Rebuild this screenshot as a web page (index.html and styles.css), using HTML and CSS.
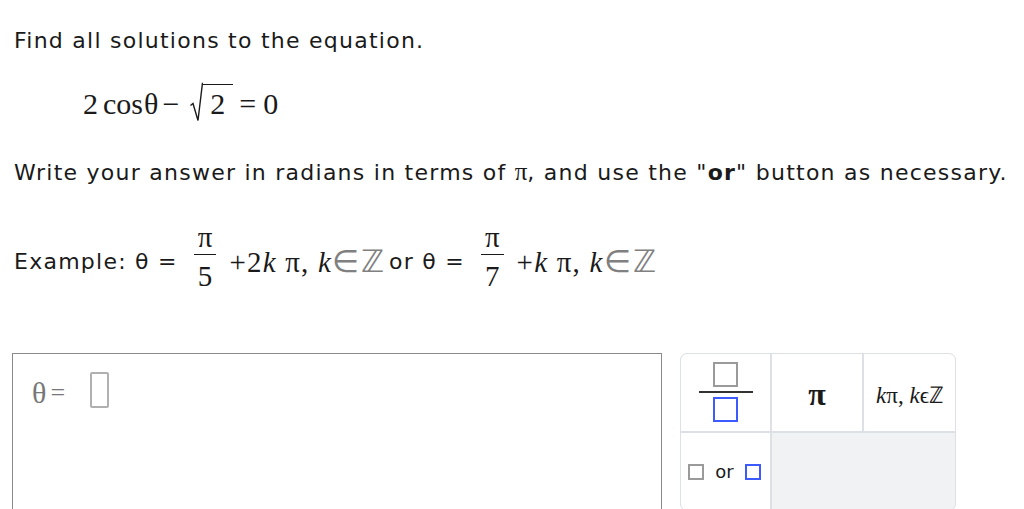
FILE: index.html
```html
<!DOCTYPE html>
<html lang="en">
<head>
<meta charset="UTF-8">
<title>Solve the equation</title>
<link rel="stylesheet" href="styles.css">
</head>
<body>
    <!-- question -->
    <p class="intro">Find all solutions to the equation.</p>
    <div class="equation">
        <span>2</span><span class="fn">cos</span><span>θ</span><span class="op">−</span><span class="sqrt"><svg class="radical" width="13" height="40" viewBox="0 0 13 40"><polyline points="0.5,23.5 3,21.5 8,38.5 12.5,0.75" fill="none" stroke="#1a1a1a" stroke-width="1.4"/></svg><span class="radicand">2</span></span><span class="op eq">=</span><span>0</span>
    </div>
    <p class="intro note">Write your answer in radians in terms of <span class="pi">π</span>, and use the "<b>or</b>" button as necessary.</p>

    <!-- example -->
    <div class="example">
        <span class="label">Example: θ =</span>
        <span class="frac"><span class="num">π</span><span class="den">5</span></span>
        <span class="math">+2<i>k</i> π, <i>k</i><span class="set">∈ℤ</span></span>
        <span class="label label-or">or θ =</span>
        <span class="frac"><span class="num">π</span><span class="den">7</span></span>
        <span class="math">+<i>k</i> π, <i>k</i><span class="set">∈ℤ</span></span>
    </div>

    <!-- answer area -->
    <div class="answer-row">
        <div class="answer-box">
            <span class="answer-theta">θ</span>
            <span class="answer-eq">=</span>
            <span class="slot"></span>
        </div>
        <div class="keypad">
            <button class="key key-frac">
                <span class="box box-gray"></span>
                <span class="bar"></span>
                <span class="box box-blue"></span>
            </button>
            <button class="key key-pi"><span>π</span></button>
            <button class="key key-kpi"><span><i>k</i>π, <i>k</i>ϵℤ</span></button>
            <button class="key key-or">
                <span class="mini mini-gray"></span>
                <span>or</span>
                <span class="mini mini-blue"></span>
            </button>
            <div class="key-empty"></div>
        </div>
    </div>
</body>
</html>
```

FILE: styles.css
```css
body {
    font-family: "DejaVu Sans", Verdana, sans-serif;
    font-size: 22px;
    letter-spacing: 1.25px;
    color: #1a1a1a;
    background-color: #ffffff;
    margin: 0;
    padding: 25px 0 0 14px;
    overflow: hidden;
}
.intro {
    margin: 0;
    line-height: 32px;
}
.equation {
    font-family: "Liberation Serif", "Times New Roman", serif;
    font-size: 30px;
    letter-spacing: 0;
    line-height: 40px;
    margin: 25px 0 0 69px;
    height: 40px;
    white-space: nowrap;
}
.equation .fn {
    margin-left: 5px;
    margin-right: 1px;
}
.equation .op {
    margin: 0 4px 0 4px;
}
.equation .eq {
    margin: 0 7px 0 6px;
}
.radical {
    vertical-align: -8px;
    margin-left: 7px;
}
.radicand {
    display: inline-block;
    line-height: 30px;
    border-top: 1.5px solid #1a1a1a;
    padding: 4px 8px 0 7px;
}
.note {
    margin-top: 34px;
}
.pi {
    font-family: "Liberation Serif", serif;
    font-size: 25px;
    letter-spacing: 0;
}
.example {
    display: flex;
    align-items: center;
    margin-top: 39px;
    height: 66px;
    white-space: nowrap;
}
.label-or {
    margin-left: 3px;
}
.frac {
    display: inline-flex;
    flex-direction: column;
    align-items: center;
    font-family: "Liberation Serif", serif;
    font-size: 29px;
    letter-spacing: 0;
    line-height: 28px;
    margin: 0 0 10px 16px;
}
.frac .num {
    border-bottom: 1.5px solid #1a1a1a;
    padding: 0 4px 3px;
}
.frac .den {
    padding-top: 7px;
}
.math {
    font-family: "Liberation Serif", serif;
    font-size: 29px;
    letter-spacing: 1.2px;
    margin-left: 13px;
}
.math i {
    font-style: italic;
}
.set {
    color: #808080;
    font-size: 31px;
    letter-spacing: 2px;
}
.answer-row {
    display: flex;
    gap: 18px;
    margin-top: 59px;
    margin-left: -2px;
}
.answer-box {
    width: 650px;
    height: 170px;
    border: 1px solid #8a8a8a;
    display: flex;
    align-items: flex-start;
    padding: 18px 0 0 19px;
    box-sizing: border-box;
    color: #777777;
    font-family: "Liberation Serif", serif;
    font-size: 30px;
    letter-spacing: 0;
    line-height: 36px;
}
.answer-theta {
    margin-top: 3px;
}
.answer-eq {
    margin: 3px 25px 0 4px;
    font-size: 26px;
}
.slot {
    width: 15px;
    height: 32px;
    border: 2px solid #b0b0b0;
    border-radius: 2px;
}
.keypad {
    display: grid;
    grid-template-columns: 89px 90px 91px;
    grid-template-rows: 77px 77px;
    gap: 2px;
    background-color: #dde1e6;
    border: 1px solid #dde1e6;
    border-radius: 7px;
    overflow: hidden;
    align-self: flex-start;
}
.key {
    background-color: #ffffff;
    border: none;
    margin: 0;
    padding: 0;
    display: flex;
    align-items: center;
    justify-content: center;
    cursor: pointer;
    color: #1a1a1a;
    letter-spacing: 0;
}
.key-frac {
    flex-direction: column;
    gap: 4px;
    padding-bottom: 1px;
}
.box {
    width: 21px;
    height: 21px;
    border: 2px solid #9a9a9a;
}
.box-blue {
    border-color: #3d5afe;
}
.bar {
    width: 54px;
    height: 2px;
    background-color: #333333;
}
.key-pi {
    font-family: "Liberation Serif", serif;
    font-size: 32px;
    font-weight: bold;
    padding-top: 4px;
}
.key-kpi {
    font-family: "Liberation Serif", serif;
    font-size: 23px;
    padding-top: 2px;
}
.key-or {
    gap: 11px;
    font-family: "DejaVu Sans", Verdana, sans-serif;
    font-size: 18px;
    padding-right: 2px;
}
.mini {
    width: 12px;
    height: 12px;
    border: 2px solid #9a9a9a;
}
.mini-blue {
    border-color: #3d5afe;
}
.key-empty {
    grid-column: 2 / 4;
    background-color: #f1f2f4;
}
```
